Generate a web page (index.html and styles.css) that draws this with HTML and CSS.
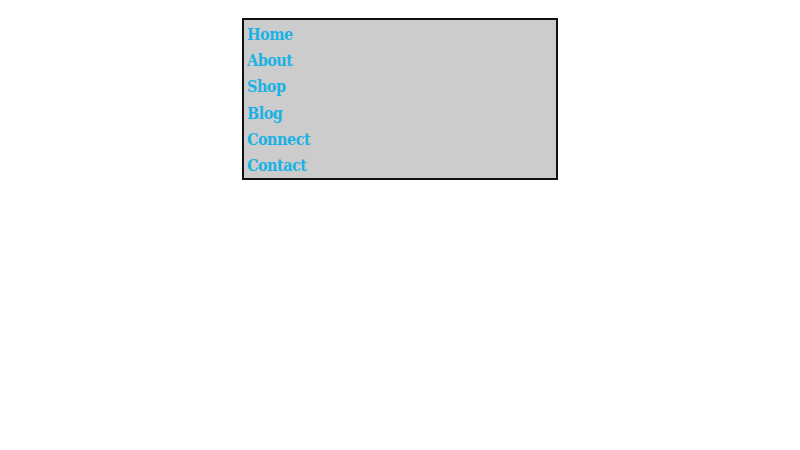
FILE: index.html
```html
<!DOCTYPE html>
<html>
<head>
<meta charset="utf-8">
<link rel="stylesheet" href="styles.css">
</head>
<body>
<nav class="menu">
  <ul class="menu-list">
    <li class="menu-item"><a class="menu-link" href="#">Home</a></li>
    <li class="menu-item"><a class="menu-link" href="#">About</a></li>
    <li class="menu-item"><a class="menu-link" href="#">Shop</a></li>
    <li class="menu-item"><a class="menu-link" href="#">Blog</a></li>
    <li class="menu-item"><a class="menu-link" href="#">Connect</a></li>
    <li class="menu-item"><a class="menu-link" href="#">Contact</a></li>
  </ul>
</nav>
</body>
</html>
```
FILE: styles.css
```css
html, body {
  margin: 0;
  padding: 0;
  background: #ffffff;
}
.menu {
  width: 312px;
  margin: 18px auto 0;
  border: 2px solid #111111;
  background: #cccccc;
  box-sizing: content-box;
}
.menu-list {
  list-style: none;
  margin: 0;
  padding: 0 0 1px 3px;
}
.menu-item {
  height: 26.2px;
  line-height: 29px;
}
.menu-link {
  font-family: "DejaVu Serif Condensed", "DejaVu Serif", serif;
  font-stretch: condensed;
  font-weight: bold;
  font-size: 16px;
  letter-spacing: -0.5px;
  color: #1ab2e4;
  text-decoration: none;
}
```
